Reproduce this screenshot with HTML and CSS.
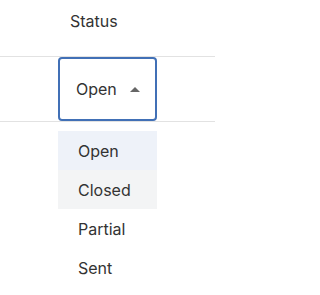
FILE: index.html
```html
<!DOCTYPE html>
<html>
<head>
<meta charset="utf-8">
<link rel="stylesheet" href="styles.css">
</head>
<body>
<div class="table">
  <div class="row head-row">
    <div class="cell head-cell">Status</div>
  </div>
  <div class="row body-row">
    <div class="cell">
      <div class="select">
        <span class="value">Open</span>
        <span class="caret"></span>
      </div>
    </div>
  </div>
</div>
<ul class="menu">
  <li class="item selected">Open</li>
  <li class="item hovered">Closed</li>
  <li class="item">Partial</li>
  <li class="item">Sent</li>
</ul>
</body>
</html>
```

FILE: styles.css
```css
html, body {
  margin: 0;
  padding: 0;
  background: #fff;
}
body {
  font-family: Inter, "Noto Sans", sans-serif;
  font-size: 16px;
  color: #333;
  width: 215px;
  height: 295px;
  overflow: hidden;
  position: relative;
}
.table {
  width: 100%;
}
.row {
  display: flex;
  border-bottom: 1px solid #e2e2e2;
}
.cell {
  margin-left: 58px;
  width: 99px;
}
.head-row {
  height: 56px;
  align-items: flex-start;
}
.head-cell {
  padding-left: 12px;
  padding-top: 13px;
  box-sizing: border-box;
  line-height: 1;
}
.body-row {
  height: 64px;
}
.select {
  box-sizing: border-box;
  height: 64px;
  border: 2px solid #4170b6;
  border-radius: 4px;
  display: flex;
  align-items: center;
  padding-left: 16px;
}
.value {
  line-height: 1;
}
.caret {
  width: 0;
  height: 0;
  border-left: 5px solid transparent;
  border-right: 5px solid transparent;
  border-bottom: 5px solid #666;
  margin-left: 13px;
}
.menu {
  list-style: none;
  margin: 9px 0 0 58px;
  padding: 0;
  width: 99px;
  background: #fff;
}
.item {
  height: 39px;
  display: flex;
  align-items: center;
  padding-left: 20px;
  line-height: 1;
}
.selected {
  background: #eef2f9;
}
.hovered {
  background: #f3f4f5;
}
```
